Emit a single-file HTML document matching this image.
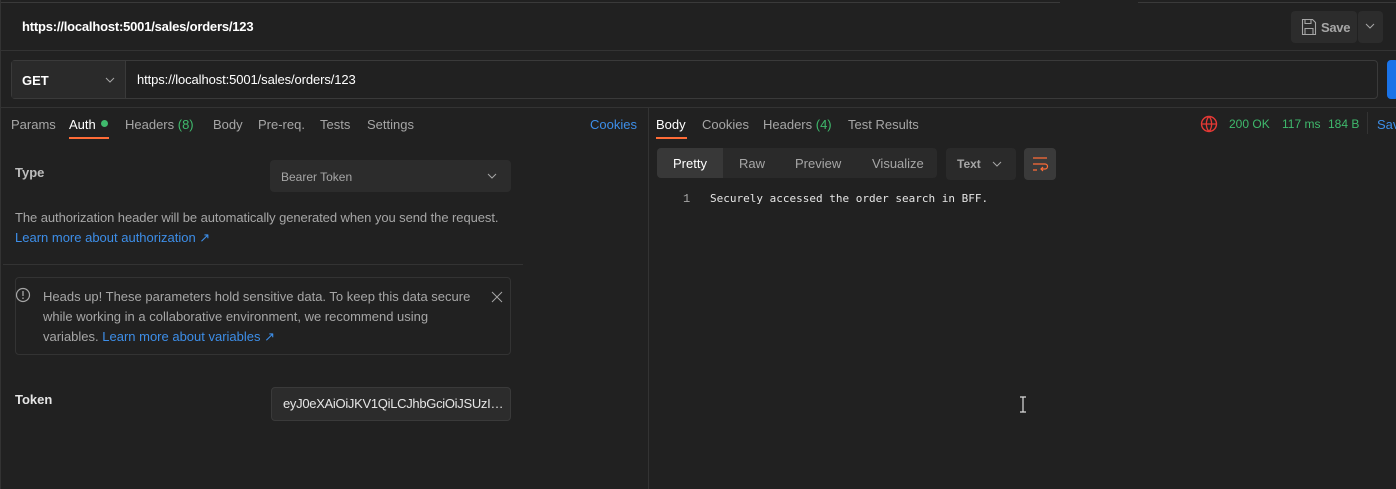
<!DOCTYPE html>
<html><head><style>
*{margin:0;padding:0;box-sizing:border-box}
body{width:1396px;height:489px;background:#212121;font-family:"Liberation Sans",sans-serif;color:#e6e6e6;position:relative;overflow:hidden;font-size:13px}
.a{position:absolute;white-space:nowrap}
.g{color:#a6a6a6}
.bl{color:#3d8ee8}
.gr{color:#3fb96c}
</style></head><body>
<div class="a" style="left:0;top:2px;width:1060px;height:1px;background:#3a3a3a"></div>
<div class="a" style="left:1138px;top:2px;width:258px;height:1px;background:#3a3a3a"></div>
<div class="a" style="left:0;top:0;width:1px;height:489px;background:#333"></div>
<div class="a" style="left:22px;top:19px;font-weight:bold;font-size:13px;color:#fff;letter-spacing:-0.2px">https://localhost:5001/sales/orders/123</div>
<div class="a" style="left:1291px;top:11px;width:66px;height:32px;background:#2c2c2c;border-radius:4px"></div>
<svg class="a" style="left:1301px;top:18px" width="16" height="18" viewBox="0 0 16 18"><path d="M1.5 1.5h10l3 3v12h-13z M4 1.5v4h6v-4 M4 16.5v-6h8v6" fill="none" stroke="#a6a6a6" stroke-width="1.1"/></svg>
<div class="a g" style="left:1321px;top:20px;font-weight:bold;letter-spacing:-0.3px">Save</div>
<div class="a" style="left:1358px;top:11px;width:25px;height:32px;background:#2c2c2c;border-radius:4px"></div>
<svg class="a" style="left:1365px;top:22px" width="10" height="8"><path d="M1 2l4 4 4-4" fill="none" stroke="#a6a6a6"/></svg>
<div class="a" style="left:0;top:50px;width:1396px;height:1px;background:#333"></div>
<div class="a" style="left:11px;top:60px;width:1367px;height:39px;border:1px solid #3a3a3a;border-radius:4px"></div>
<div class="a" style="left:12px;top:61px;width:114px;height:37px;background:#2a2a2a;border-right:1px solid #3a3a3a"></div>
<div class="a" style="left:22px;top:73px;font-weight:bold;color:#fff">GET</div>
<svg class="a" style="left:105px;top:76px" width="10" height="8"><path d="M1 2l4 4 4-4" fill="none" stroke="#a6a6a6"/></svg>
<div class="a" style="left:137px;top:72px;color:#fff;letter-spacing:-0.1px">https://localhost:5001/sales/orders/123</div>
<div class="a" style="left:1387px;top:60px;width:12px;height:39px;background:#1a73e8;border-radius:4px"></div>
<div class="a" style="left:0;top:107px;width:1396px;height:1px;background:#333"></div>
<div class="a" style="left:648px;top:107px;width:1px;height:382px;background:#333"></div>
<div class="a g" style="left:11px;top:117px">Params</div>
<div class="a" style="left:69px;top:117px;color:#fff">Auth</div>
<div class="a" style="left:101px;top:120px;width:7px;height:7px;border-radius:50%;background:#3fb96c"></div>
<div class="a" style="left:69px;top:137px;width:40px;height:2px;background:#ff6c37"></div>
<div class="a g" style="left:125px;top:117px">Headers <span class="gr">(8)</span></div>
<div class="a g" style="left:213px;top:117px">Body</div>
<div class="a g" style="left:258px;top:117px">Pre-req.</div>
<div class="a g" style="left:320px;top:117px">Tests</div>
<div class="a g" style="left:367px;top:117px">Settings</div>
<div class="a bl" style="left:590px;top:117px">Cookies</div>
<div class="a" style="left:15px;top:165px;font-weight:bold;color:#bdbdbd">Type</div>
<div class="a" style="left:270px;top:160px;width:241px;height:32px;background:#2c2c2c;border-radius:4px"></div>
<div class="a g" style="left:281px;top:170px;font-size:12px">Bearer Token</div>
<svg class="a" style="left:487px;top:172px" width="10" height="8"><path d="M1 2l4 4 4-4" fill="none" stroke="#a6a6a6"/></svg>
<div class="a g" style="left:15px;top:210px;letter-spacing:-0.07px">The authorization header will be automatically generated when you send the request.</div>
<div class="a bl" style="left:15px;top:230px">Learn more about authorization ↗</div>
<div class="a" style="left:3px;top:264px;width:520px;height:1px;background:#333"></div>
<div class="a" style="left:15px;top:277px;width:496px;height:78px;border:1px solid #333;border-radius:4px"></div>
<svg class="a" style="left:15px;top:287px" width="16" height="16"><circle cx="8" cy="8" r="6.5" fill="none" stroke="#a6a6a6" stroke-width="1.2"/><path d="M8 4v5M8 10.5v1.5" stroke="#a6a6a6" stroke-width="1.3"/></svg>
<div class="a g" style="left:43px;top:287px;line-height:20px">Heads up! These parameters hold sensitive data. To keep this data secure<br>while working in a collaborative environment, we recommend using<br>variables. <span class="bl">Learn more about variables ↗</span></div>
<svg class="a" style="left:491px;top:291px" width="12" height="12"><path d="M1 1l10 10M11 1L1 11" stroke="#a6a6a6"/></svg>
<div class="a" style="left:15px;top:392px;font-weight:bold;color:#e6e6e6">Token</div>
<div class="a" style="left:271px;top:387px;width:240px;height:34px;background:#2c2c2c;border:1px solid #3a3a3a;border-radius:4px"></div>
<div class="a" style="left:283px;top:396px;width:222px;overflow:hidden;text-overflow:ellipsis;color:#e6e6e6;letter-spacing:-0.3px">eyJ0eXAiOiJKV1QiLCJhbGciOiJSUzI1NiIsImtpZCI6</div>
<div class="a" style="left:656px;top:117px;color:#fff">Body</div>
<div class="a" style="left:656px;top:137px;width:31px;height:2px;background:#ff6c37"></div>
<div class="a g" style="left:702px;top:117px">Cookies</div>
<div class="a g" style="left:763px;top:117px">Headers <span class="gr">(4)</span></div>
<div class="a g" style="left:848px;top:117px">Test Results</div>
<svg class="a" style="left:1200px;top:115px" width="19" height="19"><circle cx="9" cy="9" r="7.5" fill="none" stroke="#e53935" stroke-width="1.4"/><path d="M1.5 9h15M9 1.5c-3.5 3.5-3.5 11.5 0 15M9 1.5c3.5 3.5 3.5 11.5 0 15" fill="none" stroke="#e53935" stroke-width="1.3"/></svg>
<div class="a gr" style="left:1229px;top:117px;font-size:12px">200 OK</div>
<div class="a gr" style="left:1282px;top:117px;font-size:12px">117 ms</div>
<div class="a gr" style="left:1328px;top:117px;font-size:12px">184 B</div>
<div class="a" style="left:1367px;top:112px;width:1px;height:22px;background:#333"></div>
<div class="a bl" style="left:1377px;top:117px">Save</div>
<div class="a" style="left:657px;top:148px;width:280px;height:30px;background:#2a2a2a;border-radius:4px"></div>
<div class="a" style="left:657px;top:148px;width:66px;height:30px;background:#383838;border-radius:4px 0 0 4px"></div>
<div class="a" style="left:673px;top:156px;color:#fff">Pretty</div>
<div class="a g" style="left:739px;top:156px">Raw</div>
<div class="a g" style="left:795px;top:156px">Preview</div>
<div class="a g" style="left:872px;top:156px">Visualize</div>
<div class="a" style="left:946px;top:148px;width:70px;height:32px;background:#2a2a2a;border-radius:4px"></div>
<div class="a g" style="left:957px;top:157px;font-size:12px;font-weight:bold">Text</div>
<svg class="a" style="left:992px;top:160px" width="10" height="8"><path d="M1 2l4 4 4-4" fill="none" stroke="#a6a6a6"/></svg>
<div class="a" style="left:1024px;top:148px;width:32px;height:32px;background:#3a3a3a;border-radius:4px"></div>
<svg class="a" style="left:1031px;top:155px" width="18" height="18"><path d="M2 3h14M2 9h12a2.5 2.5 0 0 1 0 5h-4M12 12l-2 2 2 2M2 15h4" fill="none" stroke="#ff6c37" stroke-width="1.2"/></svg>
<div class="a g" style="left:683px;top:192px;font-family:'Liberation Mono',monospace;font-size:12px">1</div>
<div class="a" style="left:710px;top:192px;font-family:'DejaVu Sans Mono',monospace;font-size:11px;color:#e6e6e6">Securely accessed the order search in BFF.</div>
<svg class="a" style="left:1018px;top:396px" width="10" height="17"><path d="M2 1h6M5 1v15M2 16h6" stroke="#ddd" stroke-width="1.2" fill="none"/></svg>
</body></html>
